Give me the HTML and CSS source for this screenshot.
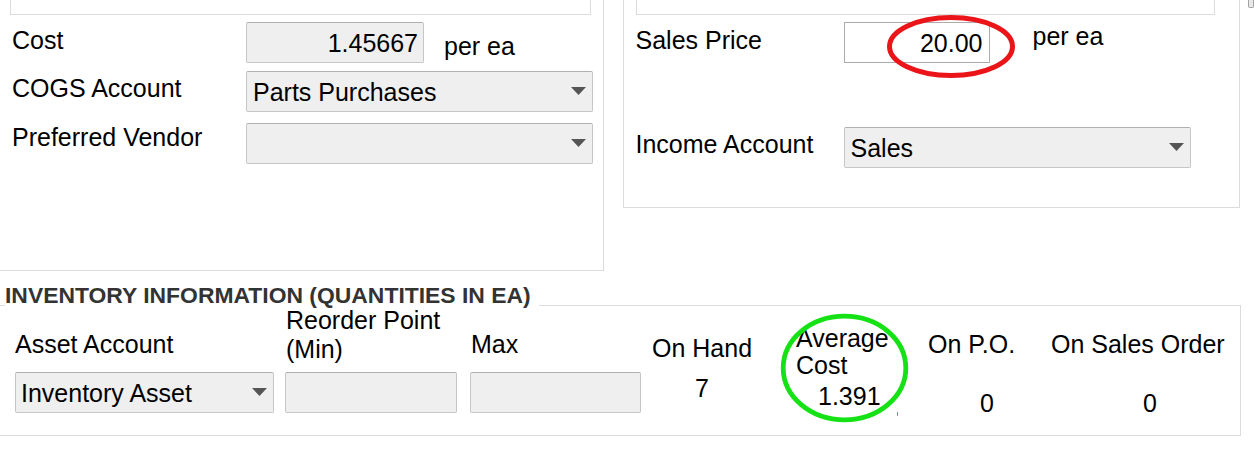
FILE: index.html
```html
<!DOCTYPE html>
<html lang="en">
<head>
<meta charset="utf-8">
<title>Item – Inventory</title>
<link rel="stylesheet" href="styles.css">
</head>
<body>
<div class="top">
  <section class="panel panel-left">
    <div class="stub stub-left"></div>
    <div class="row row-first">
      <div class="label label-l lbl-cost">Cost</div>
      <div class="field num cost">1.45667</div>
      <div class="unit unit-left">per ea</div>
    </div>
    <div class="row row-cogs">
      <div class="label label-l lbl-cogs">COGS Account</div>
      <div class="field select sel-wide"><span>Parts Purchases</span><svg class="arrow" width="15" height="8" viewBox="0 0 15 8"><path d="M0 0H15L7.5 8Z"/></svg></div>
    </div>
    <div class="row row-vendor">
      <div class="label label-l lbl-vendor">Preferred Vendor</div>
      <div class="field select sel-wide"><span></span><svg class="arrow" width="15" height="8" viewBox="0 0 15 8"><path d="M0 0H15L7.5 8Z"/></svg></div>
    </div>
  </section>
  <section class="panel panel-right">
    <div class="stub stub-right"></div>
    <div class="row row-first">
      <div class="label label-r lbl-sales">Sales Price</div>
      <div class="field num price">20.00</div>
      <div class="unit unit-right">per ea</div>
    </div>
    <div class="row row-income">
      <div class="label label-r lbl-income">Income Account</div>
      <div class="field select sel-wide"><span>Sales</span><svg class="arrow" width="15" height="8" viewBox="0 0 15 8"><path d="M0 0H15L7.5 8Z"/></svg></div>
    </div>
  </section>
  <div class="nub"></div>
</div>

<section class="inventory">
  <div class="inv-head">
    <div class="inv-lead"></div>
    <h2 class="inv-title">INVENTORY INFORMATION (QUANTITIES IN EA)</h2>
    <div class="inv-rule"></div>
  </div>
  <div class="inv-body">
    <div class="col col-asset">
      <div class="clabel lbl-std">Asset Account</div>
      <div class="field select ctl-std"><span>Inventory Asset</span><svg class="arrow" width="15" height="8" viewBox="0 0 15 8"><path d="M0 0H15L7.5 8Z"/></svg></div>
    </div>
    <div class="col col-reorder">
      <div class="clabel lbl-two">Reorder Point<br>(Min)</div>
      <div class="field ctl-two"></div>
    </div>
    <div class="col col-max">
      <div class="clabel lbl-std indent1">Max</div>
      <div class="field ctl-std"></div>
    </div>
    <div class="col col-onhand">
      <div class="clabel lbl-onhand">On Hand</div>
      <div class="value val-onhand">7</div>
    </div>
    <div class="col col-avg">
      <div class="clabel lbl-avg">Average<br>Cost</div>
      <div class="value val-avg">1.391</div>
    </div>
    <div class="col col-po">
      <div class="clabel lbl-std">On P.O.</div>
      <div class="value val-zero val-po">0</div>
    </div>
    <div class="col col-so">
      <div class="clabel lbl-std">On Sales Order</div>
      <div class="value val-zero val-so">0</div>
    </div>
  </div>
</section>

<svg class="marks" width="1254" height="454" viewBox="0 0 1254 454">
  <ellipse cx="951" cy="46.5" rx="61.5" ry="29" fill="none" stroke="#ea1419" stroke-width="5"/>
  <ellipse cx="844.5" cy="368" rx="61.3" ry="51.8" fill="none" stroke="#14e214" stroke-width="4.8"/>
  <rect x="897" y="412" width="1" height="4" fill="#14e214"/>
</svg>
</body>
</html>
```

FILE: styles.css
```css
* { box-sizing: border-box; }

body {
  margin: 0;
  width: 1254px;
  height: 454px;
  overflow: hidden;
  background: #fff;
  color: #000;
  font-family: "Liberation Sans", Arial, sans-serif;
  font-size: 25px;
  line-height: 29px;
  position: relative;
}

/* ---------- top panels ---------- */
.top {
  display: flex;
  align-items: flex-start;
}

.panel { border-bottom: 1px solid #dcdcdc; }

.panel-left {
  width: 604px;
  height: 271px;
  border-right: 1px solid #dcdcdc;
}

.panel-right {
  width: 618px;
  height: 208px;
  margin-left: 19px;
  border-left: 1px solid #dcdcdc;
  border-right: 1px solid #dcdcdc;
}

.stub {
  height: 15px;
  border: 1px solid #dcdcdc;
  border-top: none;
}
.stub-left { margin-left: 10px; width: 581px; }
.stub-right { margin-left: 12px; width: 579px; }

.nub {
  width: 6px;
  height: 8px;
  margin-left: 8px;
  border: 1px solid #a3a3a3;
  border-top: none;
  border-radius: 0 0 2px 2px;
  background: #e8e8e8;
}

.row {
  display: flex;
  align-items: flex-start;
  padding-left: 12px;
}
.row-first { margin-top: 7px; }
.row-cogs { margin-top: 8px; }
.row-vendor { margin-top: 11px; }
.row-income { margin-top: 64px; }

.label { white-space: nowrap; }
.label-l { width: 234px; }
.label-r { width: 208px; }
.lbl-cost { margin-top: 4px; }
.lbl-cogs { margin-top: 3px; }
.lbl-vendor { margin-top: 0; }
.lbl-sales { margin-top: 4px; }
.lbl-income { margin-top: 3px; }

.unit { white-space: nowrap; }
.unit-left { margin-left: 20px; margin-top: 10px; }
.unit-right { margin-left: 43px; margin-top: 0; }

/* ---------- form controls ---------- */
.field {
  height: 41px;
  border: 1px solid #c6c6c6;
  border-top-color: #b0b0b0;
  border-radius: 2px;
  background: #efefef;
  padding: 2px 6px 0 6px;
  line-height: 37px;
  white-space: nowrap;
  overflow: hidden;
}

.num { text-align: right; padding-right: 5px; }
.cost { width: 178px; }
.price {
  width: 146px;
  background: #fff;
  border-color: #ababab;
  border-radius: 0;
  padding-right: 6px;
}

.select {
  display: flex;
  justify-content: space-between;
  align-items: flex-start;
}
.sel-wide { width: 347px; }
.arrow {
  flex: none;
  margin-top: 13px;
  fill: #555;
}

/* ---------- inventory ---------- */
.inventory {
  width: 1241px;
  margin-top: 13px;
}

.inv-head {
  display: flex;
  align-items: flex-end;
  height: 22px;
}
.inv-lead {
  width: 5px;
  align-self: stretch;
  border-bottom: 1px solid #dcdcdc;
}
.inv-title {
  margin: 0;
  padding-right: 8px;
  font-size: 22.9px;
  line-height: 22px;
  font-weight: bold;
  color: #333;
  white-space: nowrap;
}
.inv-rule {
  flex: 1;
  align-self: stretch;
  border-bottom: 1px solid #dcdcdc;
}

.inv-body {
  display: flex;
  height: 130px;
  border-right: 1px solid #dcdcdc;
  border-bottom: 1px solid #dcdcdc;
}

.col {
  display: flex;
  flex-direction: column;
  flex: none;
}
.clabel { white-space: nowrap; }

.col-asset { margin-left: 15px; width: 259px; }
.col-reorder { margin-left: 11px; width: 172px; }
.col-max { margin-left: 13px; width: 171px; }
.col-onhand { margin-left: 11px; width: 100px; }
.col-avg { margin-left: 44px; width: 94px; }
.col-po { margin-left: 38px; width: 85px; }
.col-so { margin-left: 38px; width: 180px; }

.lbl-std { margin-top: 24px; }
.ctl-std { margin-top: 13px; }
.lbl-two { margin-top: 0; line-height: 28.5px; padding-left: 1px; }
.ctl-two { margin-top: 9px; }
.indent1 { padding-left: 1px; }

.col-asset .select { padding-left: 5px; }

.lbl-onhand { margin-top: 28px; }
.val-onhand { margin-top: 11px; text-align: center; }

.lbl-avg { margin-top: 19px; line-height: 27px; }
.val-avg { margin-top: 3px; padding-left: 22px; }

.val-zero { margin-top: 30px; }
.val-po { padding-left: 52px; }
.val-so { padding-left: 92px; }

/* ---------- annotation marks ---------- */
.marks {
  position: absolute;
  left: 0;
  top: 0;
  pointer-events: none;
}
```
